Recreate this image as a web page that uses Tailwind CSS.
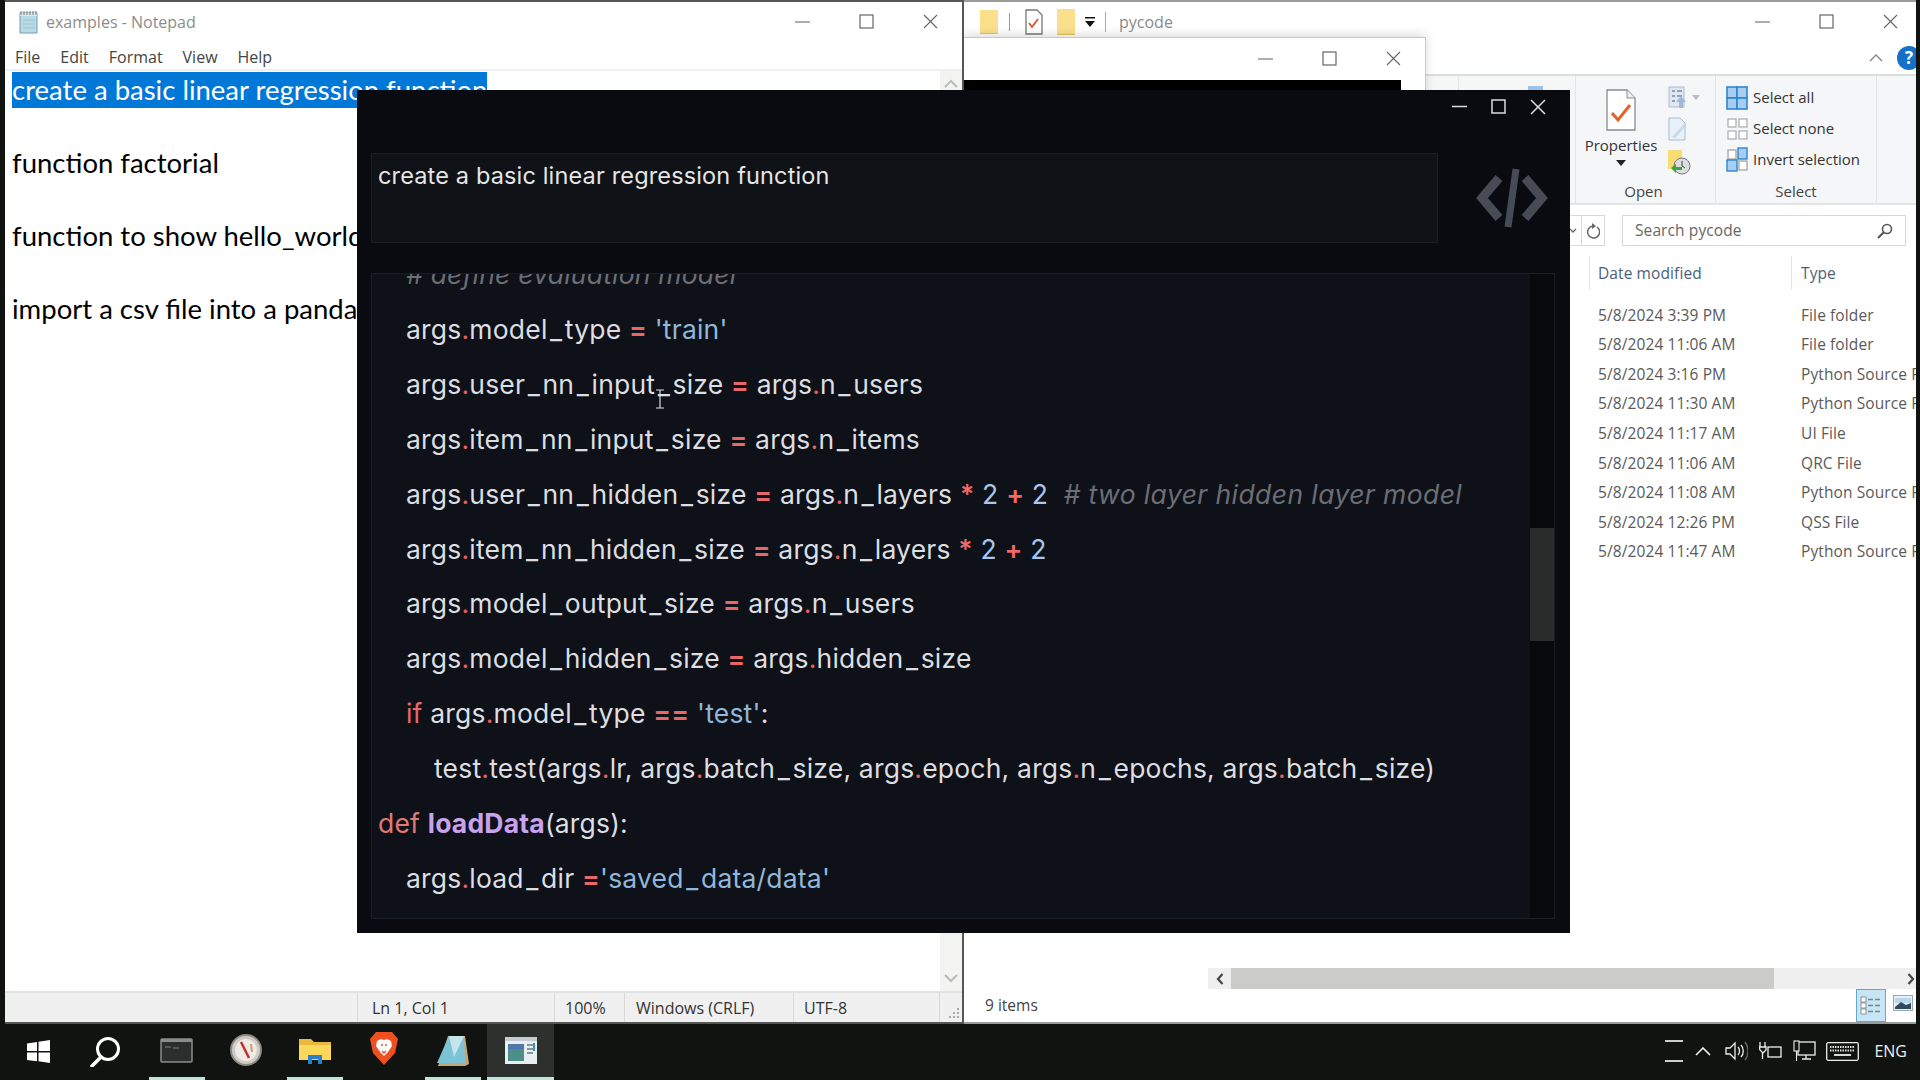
<!DOCTYPE html>
<html lang="en">
<head>
  <meta charset="UTF-8">
  <meta name="viewport" content="width=device-width, initial-scale=1.0">
  <title>Desktop</title>
  <script src="https://cdn.jsdelivr.net/npm/@tailwindcss/browser@4"></script>
</head>
<body class="bg-[#111311]">
<div class="relative w-[1920px] h-[1080px] overflow-hidden flex flex-col font-['Open_Sans',sans-serif]">

  <!-- desktop -->
  <div class="relative h-[1023px] bg-[#111311]">

    <!-- explorer window -->
    <div class="absolute left-[963px] top-0 w-[953px] h-[1024px] bg-white border-t-2 border-b-2 border-[#9a9c9a] flex flex-col overflow-hidden">
      <div class="h-[39px] flex items-center shrink-0 relative">
        <div class="w-[18px] h-[24px] ml-[17px] bg-[#fbe08c] border-b border-[#e6c25c]"></div>
        <div class="w-px h-[18px] bg-[#999] ml-[11px]"></div>
        <svg class="ml-[15px]" width="18" height="26" viewBox="0 0 18 26"><path d="M1 1h11l5 5v19H1z" fill="#fff" stroke="#777" stroke-width="1.3"/><path d="M4 14l3 4 6-8" fill="none" stroke="#d9562b" stroke-width="1.8"/></svg>
        <div class="w-[18px] h-[26px] ml-[14px] bg-[#fbe08c] border-b border-[#e6c25c]"></div>
        <svg class="ml-[9px]" width="12" height="12" viewBox="0 0 12 12"><path d="M1 1h10v1.5H1z" fill="#111"/><path d="M1 5h10l-5 6z" fill="#111"/></svg>
        <div class="w-px h-[20px] bg-[#aaa] ml-[9px]"></div>
        <span class="ml-[13px] text-[16px] text-[#8a8a8a]">pycode</span>
        <div class="ml-auto flex items-center pr-[18px] gap-[49px]">
          <svg width="15" height="15" viewBox="0 0 15 15"><path d="M0 8h15" stroke="#777" stroke-width="1.2"/></svg>
          <svg width="15" height="15" viewBox="0 0 15 15"><rect x="1" y="1" width="13" height="13" fill="none" stroke="#666" stroke-width="1.2"/></svg>
          <svg width="15" height="15" viewBox="0 0 15 15"><path d="M1 1l13 13M14 1L1 14" stroke="#666" stroke-width="1.1"/></svg>
        </div>
      </div>
      <div class="h-[35px] flex items-center justify-end shrink-0 border-b-2 border-[#dcdddd] pr-[9px]">
        <svg width="14" height="9" viewBox="0 0 14 9"><path d="M1 8l6-6 6 6" fill="none" stroke="#888" stroke-width="1.4"/></svg>
        <span class="ml-[14px] w-[24px] h-[24px] -mr-[14px] rounded-full bg-[#1570c8] text-white text-[17px] font-bold flex items-center justify-center">?</span>
      </div>
      <!-- ribbon -->
      <div class="h-[129px] shrink-0 bg-[#f5f6f7] border-b-2 border-[#e3e4e5] flex justify-end pr-[39px]">
        <div class="w-[117px] border-l border-[#e2e3e4] pl-[69px] pt-[10px]">
          <div class="w-[15px] h-[6px] bg-[#9cc3e6]"></div>
        </div>
        <div class="w-[140px] border-l border-[#e2e3e4] flex flex-col">
          <div class="flex-1 flex pl-[12px]">
            <div class="w-[66px] flex flex-col items-center pt-[13px]">
              <svg width="30" height="42" viewBox="0 0 30 42"><path d="M1 1h20l8 8v32H1z" fill="#fff" stroke="#8a8a8a" stroke-width="1.3"/><path d="M21 1v8h8" fill="#eee" stroke="#8a8a8a"/><path d="M6 24l6 7 12-15" fill="none" stroke="#e2622a" stroke-width="3"/></svg>
              <span class="text-[15px] text-[#333] mt-[3px] leading-[22px] whitespace-nowrap">Properties</span>
              <svg width="10" height="7" viewBox="0 0 10 7" class="mt-[4px]"><path d="M0 0h10L5 6z" fill="#222"/></svg>
            </div>
            <div class="flex flex-col items-start pl-[14px] pt-[10px] gap-[9px]">
              <div class="flex items-center gap-[6px]">
                <svg width="18" height="22" viewBox="0 0 18 22"><rect x="1" y="1" width="15" height="20" fill="#dfe6ef" stroke="#aebdd0"/><path d="M4 5h3M9 5h5M4 10h3M9 10h5M4 15h3" stroke="#8fa2b8" stroke-width="2"/><path d="M13 10l5 6h-3v6h-4v-6H8z" fill="#9fb9d6"/></svg>
                <svg width="8" height="5" viewBox="0 0 8 5"><path d="M0 0h8L4 5z" fill="#bbb"/></svg>
              </div>
              <svg width="20" height="24" viewBox="0 0 20 24"><path d="M1 1h11l5 5v17H1z" fill="#eaf0f7" stroke="#a9bcd2"/><path d="M4 20L16 7l2 2L7 21z" fill="#c9d8e9"/></svg>
              <svg width="23" height="25" viewBox="0 0 23 25"><rect x="0" y="0" width="14" height="19" fill="#f9dd74"/><circle cx="14" cy="16" r="8" fill="#ddd" stroke="#777"/><path d="M14 11v5l3 2" stroke="#444" fill="none"/><path d="M3 18l5-4v3h6v3H8v3z" fill="#3aa53a"/></svg>
            </div>
          </div>
          <div class="h-[24px] text-center text-[15px] leading-[24px] text-[#444] pr-[4px]">Open</div>
        </div>
        <div class="w-[162px] border-l border-r border-[#e2e3e4] flex flex-col">
          <div class="flex-1 flex flex-col pl-[10px] pt-[6px]">
            <div class="h-[31px] flex items-center gap-[5px]">
              <svg width="22" height="26" viewBox="0 0 22 26"><g fill="#a8cdf0" stroke="#2b86d0" stroke-width="1.6"><rect x="1" y="2" width="10" height="11"/><rect x="11" y="2" width="10" height="11"/><rect x="1" y="13" width="10" height="11"/><rect x="11" y="13" width="10" height="11"/></g></svg>
              <span class="text-[15px] text-[#333]">Select all</span>
            </div>
            <div class="h-[31px] flex items-center gap-[5px]">
              <svg width="22" height="24" viewBox="0 0 22 24"><g fill="#fff" stroke="#aaa" stroke-width="1.2"><rect x="2" y="2" width="8" height="8"/><rect x="13" y="2" width="8" height="8"/><rect x="2" y="14" width="8" height="8"/><rect x="13" y="14" width="8" height="8"/></g></svg>
              <span class="text-[15px] text-[#333]">Select none</span>
            </div>
            <div class="h-[31px] flex items-center gap-[5px]">
              <svg width="22" height="26" viewBox="0 0 22 26"><g stroke-width="1.4"><rect x="2" y="3" width="8" height="9" fill="#fff" stroke="#aaa"/><rect x="12" y="1" width="9" height="11" fill="#a8cdf0" stroke="#2b86d0"/><rect x="1" y="13" width="10" height="11" fill="#a8cdf0" stroke="#2b86d0"/><rect x="13" y="14" width="8" height="9" fill="#fff" stroke="#aaa"/></g></svg>
              <span class="text-[15px] text-[#333] whitespace-nowrap">Invert selection</span>
            </div>
          </div>
          <div class="h-[24px] text-center text-[15px] leading-[24px] text-[#444]">Select</div>
        </div>
      </div>
      <!-- address row -->
      <div class="h-[51px] shrink-0 flex items-start justify-end pt-[10px] pr-[10px] gap-[17px]">
        <div class="h-[31px] flex items-center border border-[#d9d9d9] w-[60px] pl-[23px]">
          <svg class="shrink-0 mr-[4px]" width="8" height="6" viewBox="0 0 8 6"><path d="M1 1l3 3 3-3" fill="none" stroke="#666" stroke-width="1.3"/></svg>
          <div class="h-full border-l border-[#d9d9d9] pl-[4px] flex items-center">
            <svg width="14" height="16" viewBox="0 0 14 16"><path d="M11 4a6 6 0 1 1-4-1" fill="none" stroke="#666" stroke-width="1.5"/><path d="M6 0l4 3-4 3z" fill="#666"/></svg>
          </div>
        </div>
        <div class="w-[284px] h-[31px] border border-[#d9d9d9] flex items-center pl-[12px] pr-[12px] text-[15.5px] tracking-[0.1px] text-[#666]">
          <span>Search pycode</span>
          <svg class="ml-auto" width="16" height="16" viewBox="0 0 16 16"><circle cx="10" cy="6" r="4.5" fill="none" stroke="#555" stroke-width="1.6"/><path d="M6.5 9.5L1 15" stroke="#555" stroke-width="2.2"/></svg>
        </div>
      </div>
      <!-- file list -->
      <div class="grid grid-cols-[626px_202px_1fr] h-[34px] shrink-0 items-center text-[15.5px] tracking-[0.1px] text-[#4c607a]">
        <div></div>
        <div class="border-l border-[#e5e5e5] pl-[8px] leading-[34px]">Date modified</div>
        <div class="border-l border-[#e5e5e5] pl-[9px] leading-[34px]">Type</div>
      </div>
      <div class="grid grid-cols-[635px_203px_1fr] auto-rows-[29.6px] items-center text-[15.5px] tracking-[0.1px] text-[#5a5a5a] whitespace-nowrap mt-[10.5px]">
        <div></div><div>5/8/2024 3:39 PM</div><div>File folder</div>
        <div></div><div>5/8/2024 11:06 AM</div><div>File folder</div>
        <div></div><div>5/8/2024 3:16 PM</div><div>Python Source File</div>
        <div></div><div>5/8/2024 11:30 AM</div><div>Python Source File</div>
        <div></div><div>5/8/2024 11:17 AM</div><div>UI File</div>
        <div></div><div>5/8/2024 11:06 AM</div><div>QRC File</div>
        <div></div><div>5/8/2024 11:08 AM</div><div>Python Source File</div>
        <div></div><div>5/8/2024 12:26 PM</div><div>QSS File</div>
        <div></div><div>5/8/2024 11:47 AM</div><div>Python Source File</div>
      </div>
      <!-- h scrollbar -->
      <div class="mt-auto ml-[245px] h-[21px] shrink-0 flex bg-[#eeefee]">
        <div class="w-[23px] flex items-center justify-center"><svg width="8" height="12" viewBox="0 0 8 12"><path d="M6.5 1L2 6l4.5 5" fill="none" stroke="#444" stroke-width="2.2"/></svg></div>
        <div class="w-[543px] bg-[#cbccca]"></div>
        <div class="flex-1 flex items-center justify-end pr-[1px]"><svg width="8" height="12" viewBox="0 0 8 12"><path d="M1.5 1L6 6l-4.5 5" fill="none" stroke="#444" stroke-width="2.2"/></svg></div>
      </div>
      <div class="h-[33px] shrink-0 flex items-center pl-[22px] text-[15.5px] text-[#444]">
        <span>9 items</span>
        <svg class="ml-auto mr-[30px]" width="30" height="33" viewBox="0 0 30 33"><rect x=".5" y=".5" width="29" height="32" fill="#c6e6f6" stroke="#5fa8cf"/><g fill="#fff" stroke="#8a9096"><rect x="5" y="8" width="5" height="5"/><rect x="5" y="14" width="5" height="5"/><rect x="5" y="20" width="5" height="5"/></g><path d="M12 10.500h5M19 10.500h5M12 16.500h5M19 16.500h5M12 22.500h5M19 22.500h5" stroke="#7b848c" stroke-width="1.300"/></svg>
      </div>
      <svg class="absolute right-[3px] bottom-[11px]" width="20" height="16" viewBox="0 0 20 16"><rect x=".5" y=".5" width="19" height="15" fill="#e8eef2" stroke="#9aa7b0"/><path d="M2 3h16v5H2z" fill="#b9d7ea"/><path d="M2 12l6-5 5 3 5-2v6H2z" fill="#2f4a5c"/></svg>
    </div>

    <!-- blank window between explorer and code window -->
    <div class="absolute left-[963px] top-[37px] w-[463px] h-[60px] bg-white border-t border-r border-[#c8c8c8] shadow-[0_-2px_10px_rgba(0,0,0,0.15)] flex flex-col">
      <div class="h-[42px] flex items-center justify-end pr-[24px] pb-[2px] gap-[49px]">
        <svg width="15" height="15" viewBox="0 0 15 15"><path d="M0 8h15" stroke="#777" stroke-width="1.2"/></svg>
        <svg width="15" height="15" viewBox="0 0 15 15"><rect x="1" y="1" width="13" height="13" fill="none" stroke="#666" stroke-width="1.2"/></svg>
        <svg width="15" height="15" viewBox="0 0 15 15"><path d="M1 1l13 13M14 1L1 14" stroke="#666" stroke-width="1.1"/></svg>
      </div>
      <div class="flex-1 w-[438px] bg-black"></div>
    </div>

    <!-- notepad window -->
    <div class="absolute left-[5px] top-0 w-[959px] h-[1024px] bg-white border-t-2 border-b-2 border-r-2 border-[#555755] flex flex-col">
      <div class="h-[39px] shrink-0 flex items-center">
        <svg class="ml-[13px]" width="22" height="24" viewBox="0 0 22 24"><path d="M2 3h17v20H2z" fill="#b9dbe6" stroke="#6f9fb3"/><path d="M2 3h17v3H2z" fill="#dfe9ee"/><path d="M3 1v4M6 1v4M9 1v4M12 1v4M15 1v4M18 1v4" stroke="#777" stroke-width="1"/><path d="M5 10h12M5 14h12M5 18h12" stroke="#9cc4d3"/></svg>
        <span class="ml-[6px] text-[16px] text-[#8c8c8c]">examples - Notepad</span>
        <div class="ml-auto flex items-center pr-[24px] gap-[49px]">
          <svg width="15" height="15" viewBox="0 0 15 15"><path d="M0 8h15" stroke="#777" stroke-width="1.2"/></svg>
          <svg width="15" height="15" viewBox="0 0 15 15"><rect x="1" y="1" width="13" height="13" fill="none" stroke="#666" stroke-width="1.2"/></svg>
          <svg width="15" height="15" viewBox="0 0 15 15"><path d="M1 1l13 13M14 1L1 14" stroke="#666" stroke-width="1.1"/></svg>
        </div>
      </div>
      <div class="h-[30px] shrink-0 flex items-center pl-[10px] pt-[4px] gap-[20px] text-[16px] text-[#444] border-b-2 border-[#f0f0f0]">
        <span>File</span><span>Edit</span><span>Format</span><span>View</span><span>Help</span>
      </div>
      <div class="flex-1 flex min-h-0">
        <div class="flex-1 flex flex-col gap-[37px] pl-[7px] pt-[1px] font-['Lato',sans-serif] text-[27.5px] leading-[36px] text-black whitespace-nowrap overflow-hidden">
          <div><span class="inline-block bg-[#0078d7] text-white">create a basic linear regression function</span></div>
          <div>function factorial</div>
          <div>function to show hello_world</div>
          <div>import a csv file into a pandas dataframe</div>
        </div>
        <div class="w-[22px] shrink-0 bg-[#f3f3f2] flex flex-col justify-between items-center py-[8px]">
          <svg width="14" height="9" viewBox="0 0 14 9"><path d="M1 8l6-6 6 6" fill="none" stroke="#bbb" stroke-width="2"/></svg>
          <svg width="14" height="9" viewBox="0 0 14 9"><path d="M1 1l6 6 6-6" fill="none" stroke="#bbb" stroke-width="2"/></svg>
        </div>
      </div>
      <div class="h-[31px] shrink-0 bg-[#f0f0f0] border-t-2 border-[#e2e2e2] flex items-center text-[16px] text-[#333]">
        <div class="w-[352px] h-full"></div>
        <div class="w-[197px] h-full border-l border-[#d9d9d9] pl-[14px] flex items-center">Ln 1, Col 1</div>
        <div class="w-[70px] h-full border-l border-[#d9d9d9] pl-[10px] flex items-center">100%</div>
        <div class="w-[169px] h-full border-l border-[#d9d9d9] pl-[11px] flex items-center whitespace-nowrap">Windows (CRLF)</div>
        <div class="w-[146px] h-full border-l border-[#d9d9d9] pl-[10px] flex items-center">UTF-8</div>
        <div class="flex-1 h-full border-l border-[#d9d9d9] flex items-end justify-end pr-[2px] pb-[3px]">
          <svg width="12" height="12" viewBox="0 0 12 12"><path d="M9 1h2v2H9zM5 5h2v2H5zM9 5h2v2H9zM1 9h2v2H1zM5 9h2v2H5zM9 9h2v2H9z" fill="#aaa"/></svg>
        </div>
      </div>
    </div>

    <!-- code generator window -->
    <div class="absolute left-[357px] top-[90px] w-[1213px] h-[843px] bg-[#0a0b10] flex flex-col pl-[14px] font-['Inter',sans-serif]">
      <div class="h-[63px] shrink-0 flex items-start justify-end pt-[9px] pr-[24px] gap-[24px]">
        <svg width="15" height="15" viewBox="0 0 15 15"><path d="M0 7.500h15" stroke="#ddd" stroke-width="1.500"/></svg>
        <svg width="15" height="15" viewBox="0 0 15 15"><rect x="1" y="1" width="13" height="13" fill="none" stroke="#ddd" stroke-width="1.500"/></svg>
        <svg width="16" height="16" viewBox="0 0 16 16"><path d="M1 1l14 14M15 1L1 15" stroke="#ddd" stroke-width="1.500"/></svg>
      </div>
      <div class="flex shrink-0 items-center">
        <div class="w-[1067px] h-[90px] bg-[#0f1217] border border-[#1b1e24] pt-[4px] pl-[6px] text-[23.5px] tracking-[0.15px] leading-[36px] text-[#e6e6e6]">create a basic linear regression function</div>
        <svg class="ml-[38px]" width="72" height="60" viewBox="0 0 72 60"><g fill="none" stroke="#474b55" stroke-width="9"><path d="M23 10L6 30l17 20"/><path d="M49 10l17 20-17 20"/><path d="M40 1L32 59" stroke-width="7"/></g></svg>
      </div>
      <div class="mt-[30px] w-[1184px] h-[646px] shrink-0 bg-[#0e1117] border border-[#1a1d24] flex overflow-hidden">
        <div class="flex-1 pl-[6px] -mt-[27px] text-[26.5px] tracking-[0.2px] leading-[54.9px] text-[#dcdee1] whitespace-nowrap">
          <div class="pl-[28px] italic text-[#6b6e75]"># define evaluation model</div>
          <div class="pl-[28px]">args<span class="text-[#e8605f]">.</span>model<span class="px-[2.5px]">_</span>type <span class="font-semibold text-[#e8686a]">=</span> <span class="text-[#8fb8dc]">'train'</span></div>
          <div class="pl-[28px]">args<span class="text-[#e8605f]">.</span>user<span class="px-[2.5px]">_</span>nn<span class="px-[2.5px]">_</span>input<span class="px-[2.5px]">_</span>size <span class="font-semibold text-[#e8686a]">=</span> args<span class="text-[#e8605f]">.</span>n<span class="px-[2.5px]">_</span>users</div>
          <div class="pl-[28px]">args<span class="text-[#e8605f]">.</span>item<span class="px-[2.5px]">_</span>nn<span class="px-[2.5px]">_</span>input<span class="px-[2.5px]">_</span>size <span class="font-semibold text-[#e8686a]">=</span> args<span class="text-[#e8605f]">.</span>n<span class="px-[2.5px]">_</span>items</div>
          <div class="pl-[28px]">args<span class="text-[#e8605f]">.</span>user<span class="px-[2.5px]">_</span>nn<span class="px-[2.5px]">_</span>hidden<span class="px-[2.5px]">_</span>size <span class="font-semibold text-[#e8686a]">=</span> args<span class="text-[#e8605f]">.</span>n<span class="px-[2.5px]">_</span>layers <span class="font-semibold text-[#f0686a]">*</span> <span class="text-[#a9c7ee]">2</span> <span class="font-semibold text-[#f0686a]">+</span> <span class="text-[#a9c7ee]">2</span>&nbsp; <span class="italic tracking-[0.4px] text-[#6b6e75]"># two layer hidden layer model</span></div>
          <div class="pl-[28px]">args<span class="text-[#e8605f]">.</span>item<span class="px-[2.5px]">_</span>nn<span class="px-[2.5px]">_</span>hidden<span class="px-[2.5px]">_</span>size <span class="font-semibold text-[#e8686a]">=</span> args<span class="text-[#e8605f]">.</span>n<span class="px-[2.5px]">_</span>layers <span class="font-semibold text-[#f0686a]">*</span> <span class="text-[#a9c7ee]">2</span> <span class="font-semibold text-[#f0686a]">+</span> <span class="text-[#a9c7ee]">2</span></div>
          <div class="pl-[28px]">args<span class="text-[#e8605f]">.</span>model<span class="px-[2.5px]">_</span>output<span class="px-[2.5px]">_</span>size <span class="font-semibold text-[#e8686a]">=</span> args<span class="text-[#e8605f]">.</span>n<span class="px-[2.5px]">_</span>users</div>
          <div class="pl-[28px]">args<span class="text-[#e8605f]">.</span>model<span class="px-[2.5px]">_</span>hidden<span class="px-[2.5px]">_</span>size <span class="font-semibold text-[#e8686a]">=</span> args<span class="text-[#e8605f]">.</span>hidden<span class="px-[2.5px]">_</span>size</div>
          <div class="pl-[28px]"><span class="text-[#e8686a]">if</span> args<span class="text-[#e8605f]">.</span>model<span class="px-[2.5px]">_</span>type <span class="font-semibold text-[#e8686a]">==</span> <span class="text-[#8fb8dc]">'test'</span>:</div>
          <div class="pl-[56px]">test<span class="text-[#e8605f]">.</span>test(args<span class="text-[#e8605f]">.</span>lr, args<span class="text-[#e8605f]">.</span>batch<span class="px-[2.5px]">_</span>size, args<span class="text-[#e8605f]">.</span>epoch, args<span class="text-[#e8605f]">.</span>n<span class="px-[2.5px]">_</span>epochs, args<span class="text-[#e8605f]">.</span>batch<span class="px-[2.5px]">_</span>size)</div>
          <div><span class="text-[#e07a76]">def</span> <span class="font-bold text-[#c8a2ee]">loadData</span>(args):</div>
          <div class="pl-[28px]">args<span class="text-[#e8605f]">.</span>load<span class="px-[2.5px]">_</span>dir <span class="font-semibold text-[#e8686a]">=</span><span class="text-[#8fb8dc]">'saved<span class="px-[2.5px]">_</span>data/data'</span></div>
        </div>
        <div class="w-[24px] shrink-0 bg-[#08090d] pt-[254px]">
          <div class="h-[113px] bg-[#2a2b2b]"></div>
        </div>
      </div>
    </div>

    <!-- text cursor -->
    <svg class="absolute left-[655px] top-[389px]" width="10" height="20" viewBox="0 0 10 20"><path d="M1 1h8M5 1v18M1 19h8" stroke="#ddd" stroke-width="1.2" fill="none"/></svg>
  </div>

  <!-- taskbar -->
  <div class="h-[57px] shrink-0 bg-[#111311] flex pl-[4px]">
    <div class="w-[69px] flex items-center justify-center pb-[1px]">
      <svg width="23" height="23" viewBox="0 0 23 23" fill="#fff"><path d="M0 3.5L10 2v9H0zM11.5 1.8L23 0v11H11.5zM0 12.5h10v8.700L0 20zM11.5 12.5H23V23l-11.500-1.700z"/></svg>
    </div>
    <div class="w-[69px] flex items-center justify-center pr-[4px]">
      <svg width="31" height="31" viewBox="0 0 31 31"><circle cx="18" cy="13" r="10.500" fill="none" stroke="#fff" stroke-width="3"/><path d="M11 21L2 30" stroke="#fff" stroke-width="3.500" stroke-linecap="round"/></svg>
    </div>
    <div class="w-[69px] flex flex-col items-center">
      <div class="flex-1 flex items-center"><svg width="33" height="25" viewBox="0 0 33 25"><rect x="1" y="1" width="31" height="23" rx="1" fill="#2c2d2d" stroke="#8a8b8b" stroke-width="1.5"/><path d="M1 1h31v3H1z" fill="#8a8b8b"/><path d="M5 9h6M13 10h6" stroke="#666" stroke-width="1.500"/></svg></div>
      <div class="w-[56px] h-[3px] bg-[#bfe4dc]"></div>
    </div>
    <div class="w-[69px] flex items-center justify-center pb-[3px]">
      <svg width="32" height="32" viewBox="0 0 32 32"><circle cx="16" cy="16" r="15" fill="#cfcac4" stroke="#8d8a85" stroke-width="2"/><circle cx="16" cy="16" r="11" fill="#eeeae6"/><path d="M11 8l8 16" stroke="#c0342c" stroke-width="2.500"/><path d="M21 10l1 8" stroke="#cf9a6a" stroke-width="2"/></svg>
    </div>
    <div class="w-[69px] flex flex-col items-center">
      <div class="flex-1 flex items-center"><svg width="32" height="27" viewBox="0 0 32 27"><path d="M0 2h12l3 3h17v18H0z" fill="#e8b93c"/><path d="M0 8h32v15H0z" fill="#fbd75b"/><path d="M9 27v-9h14v9h-4v-5h-6v5z" fill="#2a7fd0"/></svg></div>
      <div class="w-[56px] h-[3px] bg-[#bfe4dc]"></div>
    </div>
    <div class="w-[69px] flex items-center justify-center pb-[6px]">
      <svg width="30" height="35" viewBox="0 0 30 35"><path d="M7 1h16l6 7-3 14-11 12L4 22 1 8z" fill="#f0501f"/><path d="M8 10l4-2 3 1 3-1 4 2 1 5-4 6-4 4-4-4-4-6z" fill="#fff"/><path d="M12 14h2M16 14h2M13 20l2 2 2-2" stroke="#f0501f" stroke-width="1.500" fill="none"/></svg>
    </div>
    <div class="w-[69px] flex flex-col items-center">
      <div class="flex-1 flex items-center"><svg width="33" height="31" viewBox="0 0 33 31"><path d="M12 1h17l4 28-4 2H2z" fill="#c5a87a"/><path d="M13 1h15l1 27H1z" fill="#7cc3d6"/><path d="M13 1h15L18 22z" fill="#c6e4ec"/></svg></div>
      <div class="w-[56px] h-[3px] bg-[#bfe4dc]"></div>
    </div>
    <div class="w-[67px] flex flex-col items-center bg-[#2e302e]">
      <div class="flex-1 flex items-center"><svg width="32" height="27" viewBox="0 0 32 27"><rect width="32" height="27" fill="#e9eef0"/><rect width="32" height="4" fill="#c5ccd2"/><path d="M3 7h16v17H3z" fill="#4b8f88"/><path d="M3 7h16v5H3z" fill="#4f77a8"/><path d="M22 8h6M22 12h6M22 16h6" stroke="#8896a2" stroke-width="2"/><path d="M29 6v8" stroke="#3a8dd0" stroke-width="2"/></svg></div>
      <div class="w-full h-[3px] bg-[#bfe4dc]"></div>
    </div>
    <!-- tray -->
    <div class="ml-auto flex items-center pr-[13px] pb-[1px] text-white">
      <div class="w-[18px] h-[22px] border-t-2 border-b-2 border-[#ccc]"></div>
      <svg class="ml-[12px]" width="16" height="9" viewBox="0 0 16 9"><path d="M1 8l7-7 7 7" fill="none" stroke="#fff" stroke-width="1.500"/></svg>
      <svg class="ml-[14px]" width="23" height="20" viewBox="0 0 23 20"><path d="M1 7h4l5-5v16l-5-5H1z" fill="none" stroke="#eee" stroke-width="1.300"/><path d="M13 6c2 2 2 6 0 8M16 4c3 3 3 9 0 12" fill="none" stroke="#eee" stroke-width="1.300"/><path d="M20 1c4 5 4 13 0 18" fill="none" stroke="#666" stroke-width="1.300"/></svg>
      <svg class="ml-[11px]" width="23" height="20" viewBox="0 0 23 20"><path d="M1 1v5M6 1v5M0 6h7v3l-3 3-3-3z M3.500 12v6" fill="none" stroke="#eee" stroke-width="1.300"/><rect x="9" y="6" width="13" height="10" fill="none" stroke="#eee" stroke-width="1.300"/></svg>
      <svg class="ml-[11px]" width="23" height="22" viewBox="0 0 23 22"><rect x="5" y="2" width="17" height="13" fill="none" stroke="#eee" stroke-width="1.300"/><path d="M13 15v4M9 19h9" stroke="#eee" stroke-width="1.300"/><rect x="1" y="1" width="5" height="10" fill="#111311" stroke="#eee" stroke-width="1.100"/><path d="M3.500 11v10" stroke="#eee" stroke-width="1.100"/></svg>
      <svg class="ml-[10px]" width="33" height="19" viewBox="0 0 33 19"><rect x=".7" y=".7" width="31.600" height="17.600" rx="1.500" fill="none" stroke="#eee" stroke-width="1.300"/><path d="M4 5h25M4 8.500h25" stroke="#ddd" stroke-width="1.800" stroke-dasharray="1.500 1"/><path d="M8 13h17" stroke="#eee" stroke-width="1.800"/></svg>
      <span class="ml-[15px] text-[16px] text-[#eee]">ENG</span>
    </div>
  </div>
</div>
</body>
</html>
